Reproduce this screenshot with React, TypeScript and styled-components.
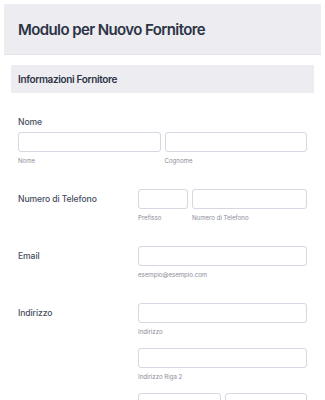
import React from 'react';
import styled, { createGlobalStyle } from 'styled-components';

const GlobalStyle = createGlobalStyle`
  html, body {
    margin: 0;
    padding: 0;
    background: #ffffff;
  }
  body {
    font-family: Inter, "Noto Sans", "Liberation Sans", sans-serif;
    color: #2c3345;
  }
`;

const Page = styled.div`
  width: 325px;
  height: 400px;
  overflow: hidden;
  padding-top: 4px;
  box-sizing: border-box;
`;

const Header = styled.div`
  margin: 0 4px;
  height: 51px;
  box-sizing: border-box;
  background: #ececf1;
  border-bottom: 1px dotted #dcdce4;
  display: flex;
  align-items: center;
  padding-left: 14px;
`;

const Title = styled.h1`
  margin: 0;
  font-size: 15px;
  font-weight: 600;
  color: #2c3345;
  letter-spacing: -0.6px;
`;

const Body = styled.div`
  padding: 10px 11px 0;
`;

const SectionHeader = styled.div`
  height: 28px;
  background: #ececf1;
  display: flex;
  align-items: center;
  padding-left: 7px;
  font-size: 10px;
  font-weight: 600;
  color: #2c3345;
  letter-spacing: -0.35px;
`;

const Fields = styled.div`
  padding: 0 7px;
`;

const StackField = styled.div`
  margin-top: 23px;
  display: flex;
  flex-direction: column;
`;

const RowField = styled.div`
  margin-top: 24px;
  display: grid;
  grid-template-columns: 120px 1fr;
`;

const Label = styled.div<{ inline?: boolean }>`
  font-size: 8.6px;
  font-weight: 500;
  color: #464c5e;
  letter-spacing: -0.1px;
  line-height: ${(p) => (p.inline ? '20px' : '12px')};
  margin-bottom: ${(p) => (p.inline ? '0' : '4px')};
`;

const Inputs = styled.div`
  display: flex;
  flex-direction: column;
  gap: 12px;
`;

const Line = styled.div<{ cols: string }>`
  display: grid;
  grid-template-columns: ${(p) => p.cols};
  column-gap: 4px;
`;

const Part = styled.div`
  display: flex;
  flex-direction: column;
`;

const Input = styled.div`
  height: 20px;
  box-sizing: border-box;
  border: 1px solid #d5d7e1;
  border-radius: 3px;
  background: #ffffff;
`;

const SubLabel = styled.div`
  margin-top: 4px;
  font-size: 6.1px;
  line-height: 9px;
  color: #8a8c98;
`;

const App: React.FC = () => {
  return (
    <>
      <GlobalStyle />
      <Page>
        <Header>
          <Title>Modulo per Nuovo Fornitore</Title>
        </Header>
        <Body>
          <SectionHeader>Informazioni Fornitore</SectionHeader>
          <Fields>
            <StackField>
              <Label>Nome</Label>
              <Line cols="1fr 1fr">
                <Part>
                  <Input />
                  <SubLabel>Nome</SubLabel>
                </Part>
                <Part>
                  <Input />
                  <SubLabel>Cognome</SubLabel>
                </Part>
              </Line>
            </StackField>

            <RowField>
              <Label inline>Numero di Telefono</Label>
              <Line cols="50px 1fr">
                <Part>
                  <Input />
                  <SubLabel>Prefisso</SubLabel>
                </Part>
                <Part>
                  <Input />
                  <SubLabel>Numero di Telefono</SubLabel>
                </Part>
              </Line>
            </RowField>

            <RowField>
              <Label inline>Email</Label>
              <Part>
                <Input />
                <SubLabel>esempio@esempio.com</SubLabel>
              </Part>
            </RowField>

            <RowField>
              <Label inline>Indirizzo</Label>
              <Inputs>
                <Part>
                  <Input />
                  <SubLabel>Indirizzo</SubLabel>
                </Part>
                <Part>
                  <Input />
                  <SubLabel>Indirizzo Riga 2</SubLabel>
                </Part>
                <Line cols="1fr 1fr">
                  <Part>
                    <Input />
                  </Part>
                  <Part>
                    <Input />
                  </Part>
                </Line>
              </Inputs>
            </RowField>
          </Fields>
        </Body>
      </Page>
    </>
  );
};

export default App;
